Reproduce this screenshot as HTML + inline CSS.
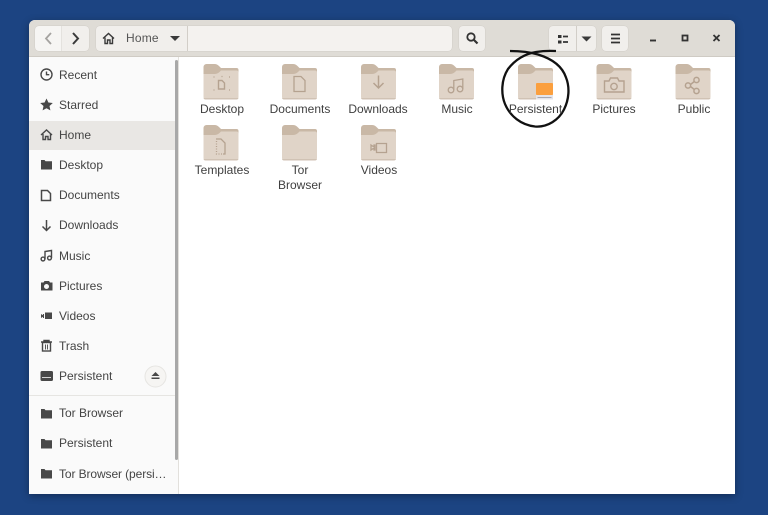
<!DOCTYPE html>
<html><head><meta charset="utf-8"><style>
*{box-sizing:border-box}
html,body{margin:0;padding:0;width:768px;height:515px;overflow:hidden;background:#1c4482;font-family:"Liberation Sans",sans-serif}
#root{position:absolute;left:0;top:0;width:768px;height:515px;filter:blur(.35px)}
.a{position:absolute}
#win{left:29px;top:20px;width:706px;height:474px;background:#fff;border-radius:6px 6px 0 0;overflow:hidden;box-shadow:0 2px 8px rgba(0,0,0,.35)}
#hdr{left:29px;top:20px;width:706px;height:37px;background:#dfdcd6;border-radius:6px 6px 0 0;border-bottom:1px solid #cfcbc4}
#side{left:29px;top:57px;width:150px;height:437px;background:#fafafa;border-right:1px solid #e2e0dc}
.btn{position:absolute;background:#f1efec;border-radius:4px;box-shadow:0 0 0 .5px #d2cec8}
.s{position:absolute;left:59px;font-size:12px;color:#444;line-height:16px;white-space:nowrap}
.l{position:absolute;font-size:12px;color:#3f3f3f;line-height:15px;text-align:center;width:80px}
svg{position:absolute;overflow:visible}
</style></head><body><div id="root">
<div class="a" id="win"></div>
<div class="a" id="hdr"></div>
<div class="a" id="side"></div>
<div class="a" style="left:29px;top:121px;width:146px;height:29px;background:#e9e7e4"></div>
<div class="a" style="left:175px;top:60px;width:3px;height:400px;background:#a8a8a8;border-radius:2px"></div>
<div class="a" style="left:29px;top:395px;width:146px;height:1px;background:#e6e5e2"></div>

<!-- header buttons -->
<div class="btn" style="left:35px;top:26px;width:27px;height:25px;border-radius:4px 0 0 4px;background:#f6f5f3"></div>
<div class="btn" style="left:62px;top:26px;width:27px;height:25px;border-radius:0 4px 4px 0"></div>
<div class="btn" style="left:96px;top:26px;width:91px;height:25px;border-radius:4px 0 0 4px"></div>
<div class="btn" style="left:188px;top:26px;width:264px;height:25px;border-radius:0 4px 4px 0;background:#f4f2ef"></div>
<div class="btn" style="left:459px;top:26px;width:26px;height:25px"></div>
<div class="btn" style="left:549px;top:26px;width:27px;height:25px;border-radius:4px 0 0 4px"></div>
<div class="btn" style="left:577px;top:26px;width:19px;height:25px;border-radius:0 4px 4px 0"></div>
<div class="btn" style="left:602px;top:26px;width:26px;height:25px"></div>

<svg style="left:0;top:0" width="768" height="515" fill="none">
<path d="M51 33l-5 5.500 5 5.500" stroke="#a5a3a0" stroke-width="1.800"/>
<path d="M73 33l5 5.500-5 5.500" stroke="#3a3a3a" stroke-width="2"/>
<path d="M103 38.500l5.500-5 5.500 5M105 37.500v6h2.500v-3.500h2.500v3.500h2.500v-6" stroke="#3a3a3a" stroke-width="1.400"/>
<path d="M170 36h10l-5 5z" fill="#3a3a3a"/>
<circle cx="471" cy="37" r="3.700" stroke="#333" stroke-width="1.800"/><path d="M474 40l3.500 3.500" stroke="#333" stroke-width="2.200"/>
<path d="M558 35h3.500v3h-3.500zM558 40.500h3.500v3h-3.500z" fill="#333"/><path d="M563 36.500h5M563 42h5" stroke="#333" stroke-width="1.700"/>
<path d="M581.500 36.500h10l-5 5z" fill="#3a3a3a"/>
<path d="M611 34.500h9M611 38.500h9M611 42.500h9" stroke="#333" stroke-width="1.700"/>
<path d="M650 40.500h6" stroke="#333" stroke-width="1.900"/>
<rect x="682.500" y="35.500" width="5" height="5" stroke="#333" stroke-width="1.800"/>
<path d="M713.500 35l6 6M719.500 35l-6 6" stroke="#333" stroke-width="1.800"/>

<!-- sidebar icons -->
<g stroke="#484848" stroke-width="1.400">
<circle cx="46.500" cy="74.500" r="5.500"/><path d="M46.500 71.500v3.200h2.800"/>
<path fill="#484848" stroke="none" d="M46.500 98.500l1.900 4 4.400.5-3.300 3 .9 4.400-3.900-2.200-3.900 2.200.9-4.400-3.300-3 4.400-.5z"/>
<path d="M41 135l5.500-5 5.500 5M43 134v5.500h2.500v-3h2.500v3h2.500v-5.500"/>
<path d="M41.500 190.500h6l3 3v7h-9z" stroke-width="1.500"/>
<path d="M46.500 220v10M42.500 226.500l4 4 4-4" stroke-width="1.500"/>
<circle cx="43" cy="259" r="1.900" stroke-width="1.400"/><circle cx="49.500" cy="258" r="1.900" stroke-width="1.400"/><path d="M45 259v-7.500l6.500-1v7.500" stroke-width="1.400"/>
<path d="M41 342h11M44 342v-1.500h5v1.500"/>
<rect x="42.500" y="342.500" width="8" height="8.500"/><path d="M45.500 344.500v5M47.500 344.500v5" stroke-width=".9"/>
</g>
<g fill="#484848">
<path d="M41 160h3.500l1 1.300h6.500v8.200h-11z"/>
<path fill-rule="evenodd" d="M41 282.500h2.500l1-1.500h4.500l1 1.500h2.500v8h-11.500zM46.500 284a2.500 2.500 0 1 0 .01 0z"/>
<path d="M41 314l2 1.300v-1.300h1v4h-1v-1.300l-2 1.300zM45 312.500h7v6.500h-7z"/>
<rect x="40.500" y="371" width="12.500" height="10" rx="1.500"/>
<path d="M41 409h3.500l1 1.300h6.500v8.200h-11z"/>
<path d="M41 439h3.500l1 1.300h6.500v8.200h-11z"/>
<path d="M41 469h3.500l1 1.300h6.500v8.200h-11z"/>
</g>
<path d="M42 377.500h9" stroke="#fafafa" stroke-width=".8"/>
<circle cx="155.500" cy="376.500" r="10.500" fill="#f6f5f3" stroke="#e6e5e2"/>
<path d="M155.500 372l4 4h-8zM151.500 377.500h8v1.500h-8z" fill="#484848"/>

<defs>
<g id="f">
<path d="M0 3a3 3 0 0 1 3-3h8c2 0 3 .6 4.500 2l2 2h15.500a2 2 0 0 1 2 2v8h-35z" fill="#c9b8a6"/>
<path d="M0 10h11c2 0 3.500-.6 5-2l1.500-1.500h15.500a2 2 0 0 1 2 2v24.500a2 2 0 0 1-2 2h-31a2 2 0 0 1-2-2z" fill="#e0d4c8"/>
<path d="M0 34a2 2 0 0 0 2 1.500h31a2 2 0 0 0 2-1.500z" fill="#d0c2b4"/>
</g>
</defs>
<use href="#f" x="203.500" y="64"/>
<use href="#f" x="282" y="64"/>
<use href="#f" x="361" y="64"/>
<use href="#f" x="439" y="64"/>
<use href="#f" x="518" y="64"/>
<use href="#f" x="596.500" y="64"/>
<use href="#f" x="675.500" y="64"/>
<use href="#f" x="203.500" y="125"/>
<use href="#f" x="282" y="125"/>
<use href="#f" x="361" y="125"/>
<g stroke="#b5a290" stroke-width="1.300">
<path d="M218.500 80.500h3.500l2.500 2.500v6h-6z" stroke-width="1.400"/>
<path d="M213.500 77h1M229 77h1M213.500 90h1M229 90h1M221.500 76.500h1"/>
<path d="M294 76.500h7l4 4v11h-11z"/>
<path d="M378.500 75.500v12M373.500 83l5 5 5-5" stroke-width="1.500"/>
<circle cx="451" cy="90" r="2.800"/><circle cx="460" cy="89" r="2.800"/><path d="M453.800 90v-9.500l9-1.500v10"/>
<path d="M604.500 81h4.500l1.500-3h7l1.500 3h5v11h-19.500z" stroke-width="1.400"/><circle cx="614" cy="86.500" r="3.200" stroke-width="1.400"/>
<circle cx="688" cy="85.500" r="2.600" stroke-width="1.500"/><circle cx="696.500" cy="80" r="2.600" stroke-width="1.500"/><circle cx="696.500" cy="91" r="2.600" stroke-width="1.500"/><path d="M690.500 84.500l3.800-3M690.500 86.500l3.800 3" stroke-width="1.500"/>
<path d="M216 139h5l4 4v11h-2" /><path d="M216.500 141v13h6" stroke-dasharray="1 1.500"/>
<path d="M371 145l3 2v-2h1v5h-1v-2l-3 2zM376.500 143.500h10v9h-10z"/>
</g>
<rect x="536" y="83" width="17" height="12" rx="1" fill="#fb9f3e"/>
<rect x="536" y="95" width="17" height="4.500" fill="#e4e4ea"/>
<path d="M537.500 97.500h14" stroke="#a8a8b0"/>
<path d="M556 51c-7-.4-14 0-20 1c-12 2-21 8-28 17c-7 11-7 25-3 35c5 12 16 21 30 22.500c13 1 24-7 29-17c5-10 6-22 2-32c-4-12-15-19-28-23c-10-3-19-3.500-28-3.500" stroke="#111" stroke-width="2.300"/>
</svg>

<div class="a" style="left:126px;top:31px;font-size:12px;line-height:15px;color:#555;letter-spacing:.2px">Home</div>

<div class="s" style="top:67px">Recent</div>
<div class="s" style="top:97px">Starred</div>
<div class="s" style="top:127px">Home</div>
<div class="s" style="top:157px">Desktop</div>
<div class="s" style="top:187px">Documents</div>
<div class="s" style="top:217px">Downloads</div>
<div class="s" style="top:248px">Music</div>
<div class="s" style="top:278px">Pictures</div>
<div class="s" style="top:308px">Videos</div>
<div class="s" style="top:338px">Trash</div>
<div class="s" style="top:368px">Persistent</div>
<div class="s" style="top:405px">Tor Browser</div>
<div class="s" style="top:435px">Persistent</div>
<div class="s" style="top:466px;letter-spacing:-.1px">Tor Browser (persi…</div>

<div class="l" style="left:182px;top:102px">Desktop</div>
<div class="l" style="left:260px;top:102px">Documents</div>
<div class="l" style="left:338px;top:102px">Downloads</div>
<div class="l" style="left:417px;top:102px">Music</div>
<div class="l" style="left:495.500px;top:102px">Persistent</div>
<div class="l" style="left:574px;top:102px">Pictures</div>
<div class="l" style="left:654px;top:102px">Public</div>
<div class="l" style="left:182px;top:163px">Templates</div>
<div class="l" style="left:260px;top:163px">Tor<br>Browser</div>
<div class="l" style="left:339px;top:163px">Videos</div>
</div></body></html>
